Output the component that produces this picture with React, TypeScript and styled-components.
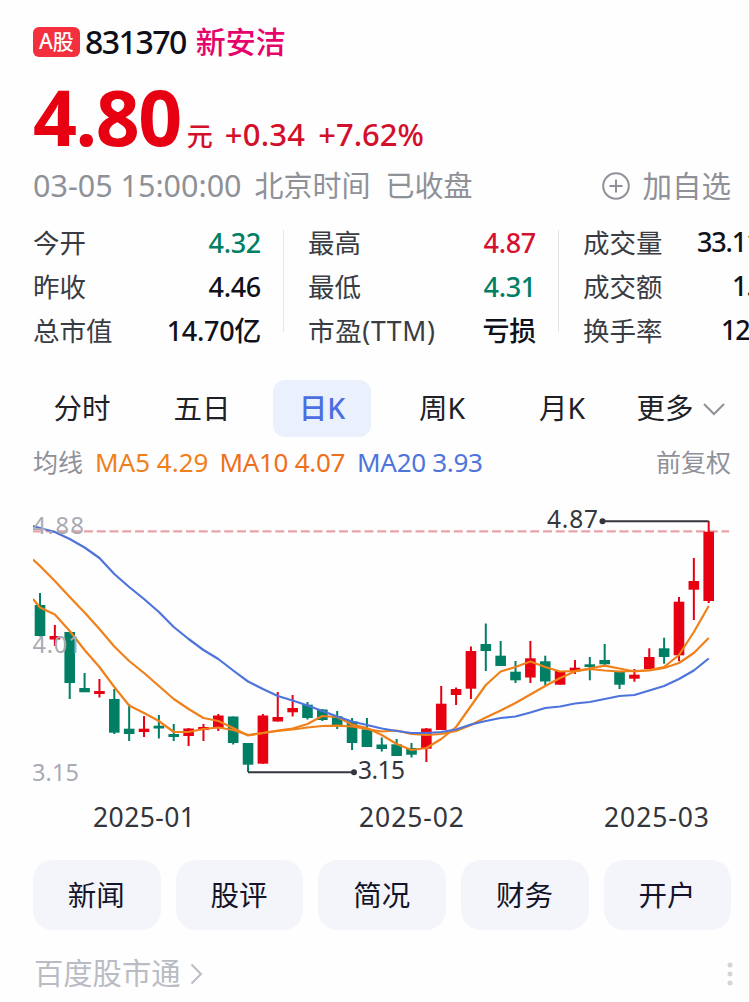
import React from "react";
import styled, { createGlobalStyle } from "styled-components";

const RED = "#e60012";
const GREEN = "#007f65";
const ORANGE = "#f0801a";
const BLUE = "#4e74dc";

const GlobalStyle = createGlobalStyle`
  * {
    box-sizing: border-box;
  }

  body {
    margin: 0;
    background: #fefefe;
    font-family: "Noto Sans", "Noto Sans CJK SC", sans-serif;
  }
`;

const Page = styled.main`
  width: 750px;
  height: 1002px;
  padding: 21px 0 0 33px;
  overflow: hidden;
  border-right: 1px solid #dcdcde;
  background: #fefefe;
  white-space: nowrap;
`;

const Text = styled.span<{
  $size: number;
  $color?: string;
  $weight?: number;
  $spacing?: number;
  $left?: number;
}>`
  font-size: ${(p) => p.$size}px;
  color: ${(p) => p.$color || "#17181f"};
  font-weight: ${(p) => p.$weight || 400};
  letter-spacing: ${(p) => p.$spacing || 0}px;
  margin-left: ${(p) => p.$left || 0}px;
  line-height: 1;
`;

const StockHeader = styled.header`
  display: flex;
  align-items: center;
  height: 42px;
`;

const MarketBadge = styled.span`
  display: flex;
  align-items: center;
  justify-content: center;
  width: 47px;
  height: 30px;
  margin-bottom: 1px;
  border-radius: 6px;
  background: #f4303f;
  color: #fff;
  font-size: 21px;
  font-weight: 500;
  line-height: 1;
`;

const PriceRow = styled.div`
  display: flex;
  align-items: baseline;
  height: 102px;
  padding-top: 15px;
`;

const StatusRow = styled.div`
  display: flex;
  align-items: center;
  height: 42px;
  padding: 0 18px 1px 0;
`;

const WatchButton = styled.button`
  display: flex;
  align-items: center;
  margin-left: auto;
  padding: 0;
  border: 0;
  background: none;
  font-family: inherit;
`;

const Stats = styled.section`
  display: flex;
  height: 132px;
  margin-top: 14px;
`;

const StatColumn = styled.div<{ $clipped?: boolean }>`
  flex: none;
  width: ${(p) => (p.$clipped ? 166 : 228)}px;
  overflow: hidden;
`;

const StatDivider = styled.i`
  flex: none;
  width: 1px;
  height: 102px;
  margin: 9px 24px 0 22px;
  background: #e4e5e9;
`;

const StatRow = styled.div`
  display: flex;
  align-items: center;
  justify-content: space-between;
  height: 44px;
`;

const StatValue = styled.span<{ $color?: string }>`
  padding-bottom: 2px;
  color: ${(p) => p.$color || "#10111a"};
  font-size: 27px;
  font-weight: 500;
  letter-spacing: -0.3px;
  line-height: 1;
`;

const ClippedValue = styled.span<{ $width: number }>`
  flex: none;
  width: ${(p) => p.$width}px;
  padding-bottom: 2px;
  overflow: hidden;
  color: #10111a;
  font-size: 27px;
  font-weight: 500;
  letter-spacing: -1.2px;
  line-height: 42px;
`;

const Tabs = styled.nav`
  display: flex;
  gap: 22px;
  margin-top: 27px;
`;

const Tab = styled.button<{ $active?: boolean }>`
  display: flex;
  align-items: center;
  justify-content: center;
  flex: none;
  gap: 9px;
  width: 98px;
  height: 57px;
  padding: 0;
  border: 0;
  border-radius: 12px;
  background: ${(p) => (p.$active ? "#eaf0fc" : "transparent")};
  color: ${(p) => (p.$active ? "#4b6ee0" : "#202127")};
  font-family: inherit;
  font-size: 28.5px;
  font-weight: ${(p) => (p.$active ? 500 : 400)};
  line-height: 1;

  &:last-child {
    width: 95px;
  }
`;

const Averages = styled.div`
  display: flex;
  align-items: center;
  height: 36px;
  margin-top: 7px;
  padding-right: 18px;
`;

const Adjustment = styled.span`
  margin-left: auto;
  color: #8f9198;
  font-size: 25px;
  line-height: 1;
`;

const ChartSvg = styled.svg`
  display: block;
  width: 716px;
  height: 360px;
  margin-top: 1px;
`;

const Links = styled.nav`
  display: flex;
  gap: 15px;
  margin-top: 19px;
`;

const LinkButton = styled.button`
  width: 127.7px;
  height: 70px;
  padding: 0 1px 0 0;
  border: 0;
  border-radius: 20px;
  background: #f4f5fa;
  color: #14152a;
  font-family: inherit;
  font-size: 28.5px;
  line-height: 1;
`;

const Footer = styled.footer`
  display: flex;
  align-items: center;
  height: 44px;
  margin-top: 22px;
  padding-right: 16px;
`;

const FooterArrow = styled.svg`
  margin-left: 10px;
`;

const MoreDots = styled.svg`
  margin-left: auto;
`;

// high, body top, body bottom, low, rising
type Candle = [number, number, number, number, boolean];

const candles: Candle[] = [
  [593, 605, 636, 636.5, false],
  [625, 636, 639.5, 646, true],
  [632, 632, 683, 699, false],
  [673, 688, 692.3, 692, false],
  [679, 691, 694, 697.5, true],
  [689, 699, 732.7, 734, false],
  [704, 728.7, 734, 741, false],
  [716, 728.7, 732, 737, true],
  [715, 725.7, 728.5, 738.5, false],
  [724, 734, 737, 741, false],
  [728, 728.5, 736, 746, true],
  [724, 727, 730, 741, true],
  [714, 715.5, 728, 731, true],
  [716.5, 716.5, 743, 744.5, false],
  [743, 743, 764.7, 772, false],
  [714, 715.5, 763.7, 763.7, true],
  [692, 717, 721.5, 721.5, true],
  [695, 708, 712.3, 716.5, true],
  [702, 704.7, 718, 719.5, false],
  [709, 709.5, 720, 721, false],
  [711, 716.3, 726, 729, false],
  [718, 721.3, 743, 750, false],
  [718, 729.3, 747, 747, false],
  [737.5, 744.5, 749, 751.5, false],
  [739, 744.3, 756, 756, false],
  [743, 748, 754.7, 757.5, false],
  [728, 728.5, 748.7, 762, true],
  [686, 703.7, 730, 730, true],
  [687.5, 689, 695, 705, true],
  [646.5, 651, 688.7, 699, true],
  [623.5, 644, 651, 671, false],
  [641, 655.7, 666, 666, false],
  [661, 671.7, 680.3, 683, false],
  [641, 658.3, 677.5, 683, true],
  [655.7, 661.3, 681.5, 685, false],
  [671, 671, 684.7, 684.7, true],
  [660, 667.7, 671.3, 674, true],
  [657, 664.3, 667, 680.3, false],
  [644, 660, 664.3, 665.7, false],
  [672, 672, 684.7, 689, false],
  [669, 674.7, 678.7, 681.7, true],
  [648.3, 657, 669, 669, true],
  [637.7, 648.3, 657, 663.7, false],
  [597, 601.7, 655.3, 661.3, true],
  [558, 581, 589.7, 620, true],
  [521, 531.7, 601, 603, true],
];

const ma5 = [
  607.5, 614.5, 631, 650, 667, 687, 705.5, 713, 721, 732, 732, 729, 727.5, 730,
  735, 733, 730.5, 728.5, 724, 716, 717, 724.5, 728, 735, 744, 750, 748, 739,
  727, 706, 685, 671.5, 667, 661.5, 667, 671.5, 671, 668.5, 665.7, 668.5, 671.5,
  670, 667, 655, 632, 606,
];

const ma10 = [
  566, 581, 597, 612.5, 629, 646.5, 661, 673, 686, 699, 709, 718, 721, 728,
  735.5, 733, 731, 729.5, 727.5, 726, 725.7, 726.5, 729, 731.5, 730.5, 734, 735,
  734, 731, 725, 717.5, 710.5, 703, 694.5, 686, 678, 671.5, 669, 670.5, 671.5,
  671, 670.5, 668, 663, 653, 638,
];

const ma20 = [
  528, 532, 539, 547.5, 558, 574, 587, 599, 612, 627, 639, 650, 659, 670.5,
  681.5, 689, 696, 700.5, 705.5, 711, 716.5, 721.5, 725, 728.5, 731, 733, 733,
  732, 729.5, 724.5, 721, 718, 716.5, 712.5, 708, 706.5, 703.5, 702, 699, 696,
  695, 690.5, 686, 679, 670.5, 658.5,
];

const STEP = 14.86;
const candleX = (i: number) => 40 + i * STEP;

const linePoints = (first: number, values: number[]) =>
  [`33,${first}`, ...values.map((y, i) => `${candleX(i)},${y}`)].join(" ");

const AxisLabel = styled.text`
  fill: #a8abb3;
  font-size: 23.5px;
`;

const PriceMark = styled.text`
  fill: #34363c;
  font-size: 24.5px;
`;

const DateLabel = styled.text`
  fill: #33353b;
  font-size: 26.5px;
`;

const MaLine = styled.polyline<{ $color: string }>`
  fill: none;
  stroke: ${(p) => p.$color};
  stroke-width: 2.2;
  stroke-linejoin: round;
`;

const KLineChart: React.FC = () => (
  <ChartSvg viewBox="33 481 716 360">
    <line
      x1="33"
      x2="729"
      y1="531.3"
      y2="531.3"
      stroke="#e9a3a6"
      strokeWidth="2.2"
      strokeDasharray="9 3.75"
    />
    {candles.map(([high, top, bottom, low, rising], i) => (
      <g key={i} fill={rising ? RED : GREEN}>
        <rect
          x={candleX(i) - 1}
          y={high}
          width="2"
          height={Math.max(low - high, 0)}
        />
        <rect x={candleX(i) - 5.3} y={top} width="10.6" height={bottom - top} />
      </g>
    ))}
    <MaLine $color={ORANGE} points={linePoints(599, ma5)} />
    <MaLine $color={ORANGE} points={linePoints(559.5, ma10)} />
    <MaLine $color={BLUE} points={linePoints(526, ma20)} />

    <path d="M248 772.3H354M602 521.2H708.7" stroke="#34363c" strokeWidth="2" />
    <circle cx="354" cy="772.3" r="3" fill="#34363c" />
    <circle cx="602.5" cy="521.2" r="3" fill="#34363c" />
    <PriceMark x="358" y="779" textLength="47">3.15</PriceMark>
    <PriceMark x="547" y="527.5" textLength="51">4.87</PriceMark>

    <AxisLabel x="32.5" y="534.3" textLength="51.5">4.88</AxisLabel>
    <AxisLabel x="32.5" y="653.3" textLength="49">4.01</AxisLabel>
    <AxisLabel x="32" y="781" textLength="47">3.15</AxisLabel>

    <DateLabel x="93" y="826.5" textLength="102">2025-01</DateLabel>
    <DateLabel x="359" y="826.5" textLength="105">2025-02</DateLabel>
    <DateLabel x="604" y="826.5" textLength="105">2025-03</DateLabel>
  </ChartSvg>
);

type Stat = { label: string; value: string; color?: string; spacing?: number };

const leftStats: Stat[] = [
  { label: "今开", value: "4.32", color: GREEN },
  { label: "昨收", value: "4.46" },
  { label: "总市值", value: "14.70亿" },
];

const middleStats: Stat[] = [
  { label: "最高", value: "4.87", color: "#d6102f" },
  { label: "最低", value: "4.31", color: GREEN },
  { label: "市盈(TTM)", value: "亏损", spacing: 0.65 },
];

const rightStats = [
  { label: "成交量", value: "33.11", width: 52 },
  { label: "成交额", value: "1.", width: 17 },
  { label: "换手率", value: "12", width: 28 },
];

const StatList: React.FC<{ items: Stat[] }> = ({ items }) => (
  <StatColumn>
    {items.map((item) => (
      <StatRow key={item.label}>
        <Text $size={26.5} $color="#3a3c43" $spacing={item.spacing}>
          {item.label}
        </Text>
        <StatValue $color={item.color}>{item.value}</StatValue>
      </StatRow>
    ))}
  </StatColumn>
);

const App: React.FC = () => (
  <>
    <GlobalStyle />
    <Page>
      <StockHeader>
        <MarketBadge>A股</MarketBadge>
        <Text $size={32} $left={5} $spacing={-1.5} $color="#0e0f18" $weight={500}>
          831370
        </Text>
        <Text $size={30} $left={10} $weight={500} $color="#e6046c">
          新安洁
        </Text>
      </StockHeader>

      <PriceRow>
        <Text $size={77} $weight={700} $color={RED} $spacing={-1.5}>
          4.80
        </Text>
        <Text $size={26} $left={6} $color="#d3102c" $weight={500}>
          元
        </Text>
        <Text $size={31} $left={12} $color="#d3102c" $weight={500} $spacing={0.2}>
          +0.34
        </Text>
        <Text $size={31} $left={13} $color="#d3102c" $weight={500}>
          +7.62%
        </Text>
      </PriceRow>

      <StatusRow>
        <Text $size={30.5} $color="#8f9198">
          03-05 15:00:00
        </Text>
        <Text $size={29} $left={13} $color="#8f9198">
          北京时间
        </Text>
        <Text $size={29} $left={15} $color="#8f9198">
          已收盘
        </Text>
        <WatchButton>
          <svg width="28" height="28" viewBox="0 0 28 28" fill="none">
            <circle cx="14" cy="14" r="12.8" stroke="#8f9198" strokeWidth="2" />
            <path d="M14 7.5v13M7.5 14h13" stroke="#8f9198" strokeWidth="2" />
          </svg>
          <Text $size={29.5} $left={12} $color="#8f9198">
            加自选
          </Text>
        </WatchButton>
      </StatusRow>

      <Stats>
        <StatList items={leftStats} />
        <StatDivider />
        <StatList items={middleStats} />
        <StatDivider />
        <StatColumn $clipped>
          {rightStats.map((item) => (
            <StatRow key={item.label}>
              <Text $size={26.5} $color="#3a3c43">
                {item.label}
              </Text>
              <ClippedValue $width={item.width}>{item.value}</ClippedValue>
            </StatRow>
          ))}
        </StatColumn>
      </Stats>

      <Tabs>
        <Tab>分时</Tab>
        <Tab>五日</Tab>
        <Tab $active>日K</Tab>
        <Tab>周K</Tab>
        <Tab>月K</Tab>
        <Tab>
          更多
          <svg width="22" height="14" viewBox="0 0 22 14" fill="none">
            <path d="M1 2l10 10L21 2" stroke="#8f9198" strokeWidth="2" />
          </svg>
        </Tab>
      </Tabs>

      <Averages>
        <Text $size={25} $color="#8f9198">
          均线
        </Text>
        <Text $size={26} $left={12} $color={ORANGE}>
          MA5 4.29
        </Text>
        <Text $size={26} $left={11} $color="#ef701c" $spacing={-0.3}>
          MA10 4.07
        </Text>
        <Text $size={26} $left={12} $color={BLUE} $spacing={-0.3}>
          MA20 3.93
        </Text>
        <Adjustment>前复权</Adjustment>
      </Averages>

      <KLineChart />

      <Links>
        {["新闻", "股评", "简况", "财务", "开户"].map((name) => (
          <LinkButton key={name}>{name}</LinkButton>
        ))}
      </Links>

      <Footer>
        <Text $size={29.3} $left={1} $color="#b9bcc3">
          百度股市通
        </Text>
        <FooterArrow width="13" height="22" viewBox="0 0 13 22" fill="none">
          <path d="M1.5 1.5l9.5 9.5-9.5 9.5" stroke="#b9bcc3" strokeWidth="2" />
        </FooterArrow>
        <MoreDots width="6" height="24" viewBox="0 0 6 24" fill="#d5d5d8">
          <circle cx="3" cy="3" r="2.5" />
          <circle cx="3" cy="12" r="2.5" />
          <circle cx="3" cy="21" r="2.5" />
        </MoreDots>
      </Footer>
    </Page>
  </>
);

export default App;
